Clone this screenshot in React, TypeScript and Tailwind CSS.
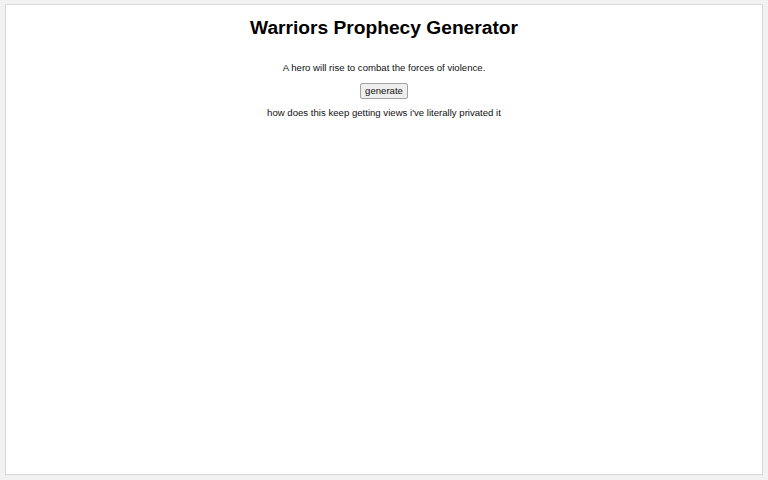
export default function App() {
  return (
    <div className="h-[480px] w-[768px] bg-[#f2f2f2] pt-[4px] pl-[5px]" style={{ fontFamily: '"Liberation Sans", Arial, sans-serif' }}>
      <div className="flex h-[471px] w-[758px] flex-col items-center border border-[#dadada] bg-white text-black shadow-[0_0_1px_rgba(0,0,0,0.08)]">
        <h1 className="mt-[12px] text-[19.2px] font-bold leading-[22px]">Warriors Prophecy Generator</h1>
        <p className="mt-[23px] text-[9.6px] leading-[11px] text-[#111]">A hero will rise to combat the forces of violence.</p>
        <button className="mt-[10px] h-[16px] rounded-[2px] border border-[#a3a3a3] bg-[#efefef] px-[4px] text-[9.6px] leading-[14px] text-[#111]">generate</button>
        <p className="mt-[8px] text-[9.6px] leading-[11px] text-[#111]">how does this keep getting views i've literally privated it</p>
      </div>
    </div>
  );
}
